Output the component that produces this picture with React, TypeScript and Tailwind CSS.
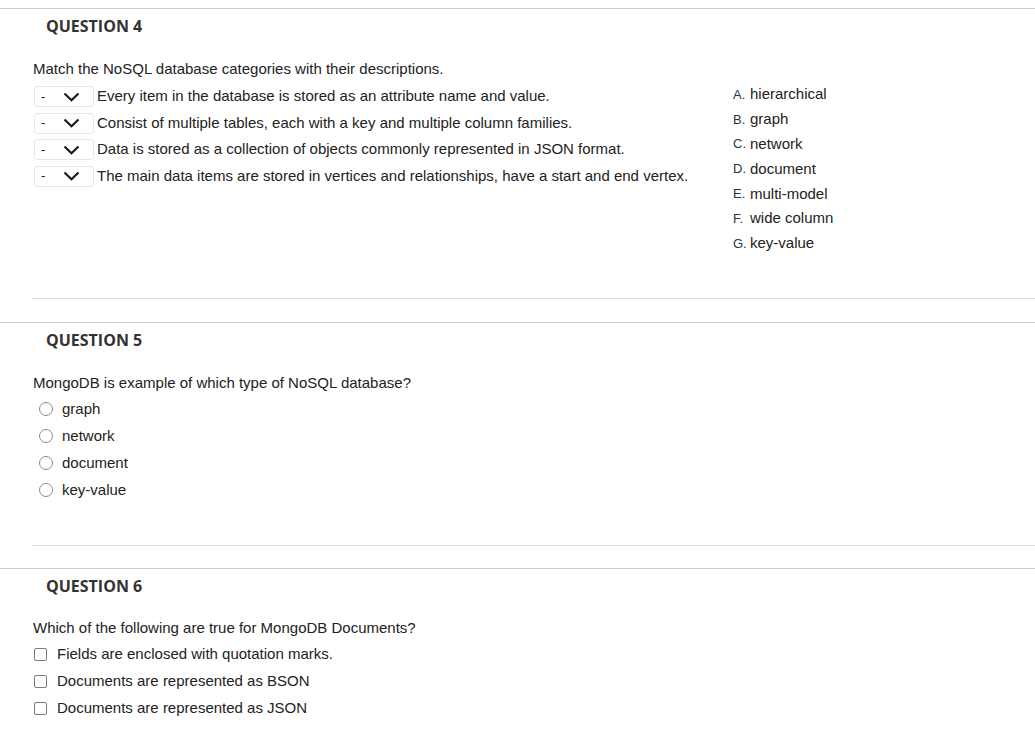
const body = { fontFamily: '"Liberation Sans", Arial, sans-serif' }
const head = { fontFamily: '"Open Sans", "Liberation Sans", sans-serif' }

const matchRows = [
  'Every item in the database is stored as an attribute name and value.',
  'Consist of multiple tables, each with a key and multiple column families.',
  'Data is stored as a collection of objects commonly represented in JSON format.',
  'The main data items are stored in vertices and relationships, have a start and end vertex.',
]

const answers = [
  ['A.', 'hierarchical'],
  ['B.', 'graph'],
  ['C.', 'network'],
  ['D.', 'document'],
  ['E.', 'multi-model'],
  ['F.', 'wide column'],
  ['G.', 'key-value'],
]

function Chevron() {
  return (
    <svg width="17" height="10" viewBox="0 0 17 10" className="ml-auto mr-[13px]">
      <polyline points="1.5,1.5 8.5,8.2 15.5,1.5" fill="none" stroke="#1a1a1a" strokeWidth="2.2" />
    </svg>
  )
}

function Heading({ children }: { children: string }) {
  return (
    <div className="pl-[46px] pt-[7px] h-[27px] text-[16px] leading-[20px] font-bold text-[#333]" style={head}>
      {children}
    </div>
  )
}

export default function App() {
  return (
    <div className="w-[1035px] h-[738px] overflow-hidden bg-white text-[#222] pt-[8px]" style={body}>
      {/* Question 4 */}
      <div className="border-t border-[#cfcfcf]">
        <Heading>QUESTION 4</Heading>
        <div className="pl-[33px] mt-[24px] text-[15px] leading-[18px]">
          Match the NoSQL database categories with their descriptions.
        </div>
        <div className="flex mt-[4px]">
          <div className="pl-[34px] w-[733px] flex flex-col gap-[5.5px] pt-[4px]">
            {matchRows.map((t) => (
              <div key={t} className="flex items-center h-[21px]">
                <div className="w-[60px] h-[21px] border border-[#e6e6e6] rounded-[3px] flex items-center pl-[6px] text-[13px]">
                  <span>-</span>
                  <Chevron />
                </div>
                <span className="ml-[3px] text-[15px] whitespace-nowrap">{t}</span>
              </div>
            ))}
          </div>
          <div className="flex flex-col">
            {answers.map(([l, t]) => (
              <div key={l} className="flex items-center h-[24.85px] text-[15px]">
                <span className="w-[17px] text-[13px] text-[#333]">{l}</span>
                <span>{t}</span>
              </div>
            ))}
          </div>
        </div>
        <div className="ml-[32px] mt-[42px] border-t border-[#dcdcdc]" />
      </div>

      {/* Question 5 */}
      <div className="mt-[23px] border-t border-[#cfcfcf]">
        <Heading>QUESTION 5</Heading>
        <div className="pl-[33px] mt-[24px] text-[15px] leading-[18px]">
          MongoDB is example of which type of NoSQL database?
        </div>
        <div className="mt-[4px] pl-[39px] flex flex-col">
          {['graph', 'network', 'document', 'key-value'].map((o) => (
            <div key={o} className="flex items-center h-[27px] text-[15px]">
              <span className="w-[14px] h-[14px] rounded-full border border-[#8c8c8c] bg-white" />
              <span className="ml-[9px]">{o}</span>
            </div>
          ))}
        </div>
        <div className="ml-[32px] mt-[41px] border-t border-[#dcdcdc]" />
      </div>

      {/* Question 6 */}
      <div className="mt-[22px] border-t border-[#cfcfcf]">
        <Heading>QUESTION 6</Heading>
        <div className="pl-[33px] mt-[23px] text-[15px] leading-[18px]">
          Which of the following are true for MongoDB Documents?
        </div>
        <div className="mt-[4px] pl-[34px] flex flex-col">
          {[
            'Fields are enclosed with quotation marks.',
            'Documents are represented as BSON',
            'Documents are represented as JSON',
          ].map((o) => (
            <div key={o} className="flex items-center h-[27px] text-[15px]">
              <span className="w-[13px] h-[13px] rounded-[2px] border border-[#7a7a7a] bg-white" />
              <span className="ml-[10px]">{o}</span>
            </div>
          ))}
        </div>
      </div>
    </div>
  )
}
